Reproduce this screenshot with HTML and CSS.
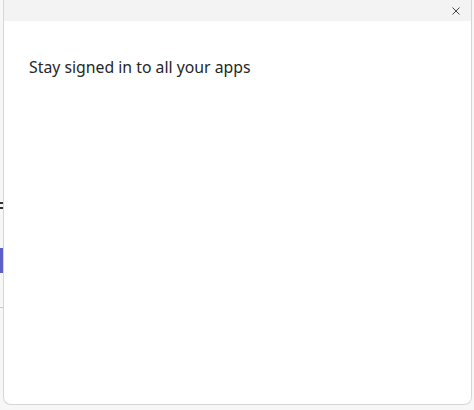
FILE: index.html
```html
<!DOCTYPE html>
<html>
<head>
<meta charset="utf-8">
<link rel="stylesheet" href="styles.css">
</head>
<body>
<div class="desktop">
  <div class="bg-mark bg-mark-1"></div>
  <div class="bg-mark bg-mark-2"></div>
  <div class="bg-accent"></div>
  <div class="bg-line"></div>
  <div class="window">
    <div class="titlebar">
      <button class="close" aria-label="Close">
        <svg width="10" height="10" viewBox="0 0 10 10"><path d="M1.5 1.5L8.5 8.5M8.5 1.5L1.5 8.5" stroke="#444" stroke-width="1" fill="none"/></svg>
      </button>
    </div>
    <div class="content">
      <h1 class="heading">Stay signed in to all your apps</h1>
    </div>
  </div>
</div>
</body>
</html>
```
FILE: styles.css
```css
html, body {
  margin: 0;
  padding: 0;
  width: 474px;
  height: 410px;
  overflow: hidden;
  background: #f3f3f3;
}
.desktop {
  position: relative;
  width: 474px;
  height: 410px;
  background: #f7f7f7;
}
.bg-mark {
  position: absolute;
  left: 0;
  width: 3px;
  height: 2px;
  background: #333;
}
.bg-mark-1 { top: 202px; }
.bg-mark-2 { top: 207px; }
.bg-accent {
  position: absolute;
  left: 0;
  top: 248px;
  width: 3px;
  height: 25px;
  background: #5b5fc7;
}
.bg-line {
  position: absolute;
  left: 0;
  top: 307px;
  width: 3px;
  height: 1px;
  background: #c8c8c8;
}
.window {
  position: absolute;
  left: 3px;
  top: 0;
  width: 467px;
  height: 404px;
  background: #fff;
  border: 1px solid #d6d6d6;
  border-top: none;
  border-radius: 0 0 8px 8px;
  display: flex;
  flex-direction: column;
  overflow: hidden;
}
.titlebar {
  height: 21px;
  background: #f3f3f3;
  display: flex;
  justify-content: flex-end;
  align-items: center;
  padding-right: 7px;
}
.close {
  border: none;
  background: transparent;
  padding: 0;
  width: 16px;
  height: 16px;
  display: flex;
  align-items: center;
  justify-content: center;
}
.content {
  padding: 35px 25px 0;
}
.heading {
  margin: 0;
  font-family: "Noto Sans", "Open Sans", sans-serif;
  font-weight: 400;
  font-size: 15.8px;
  line-height: 22px;
  color: #262626;
}
```
